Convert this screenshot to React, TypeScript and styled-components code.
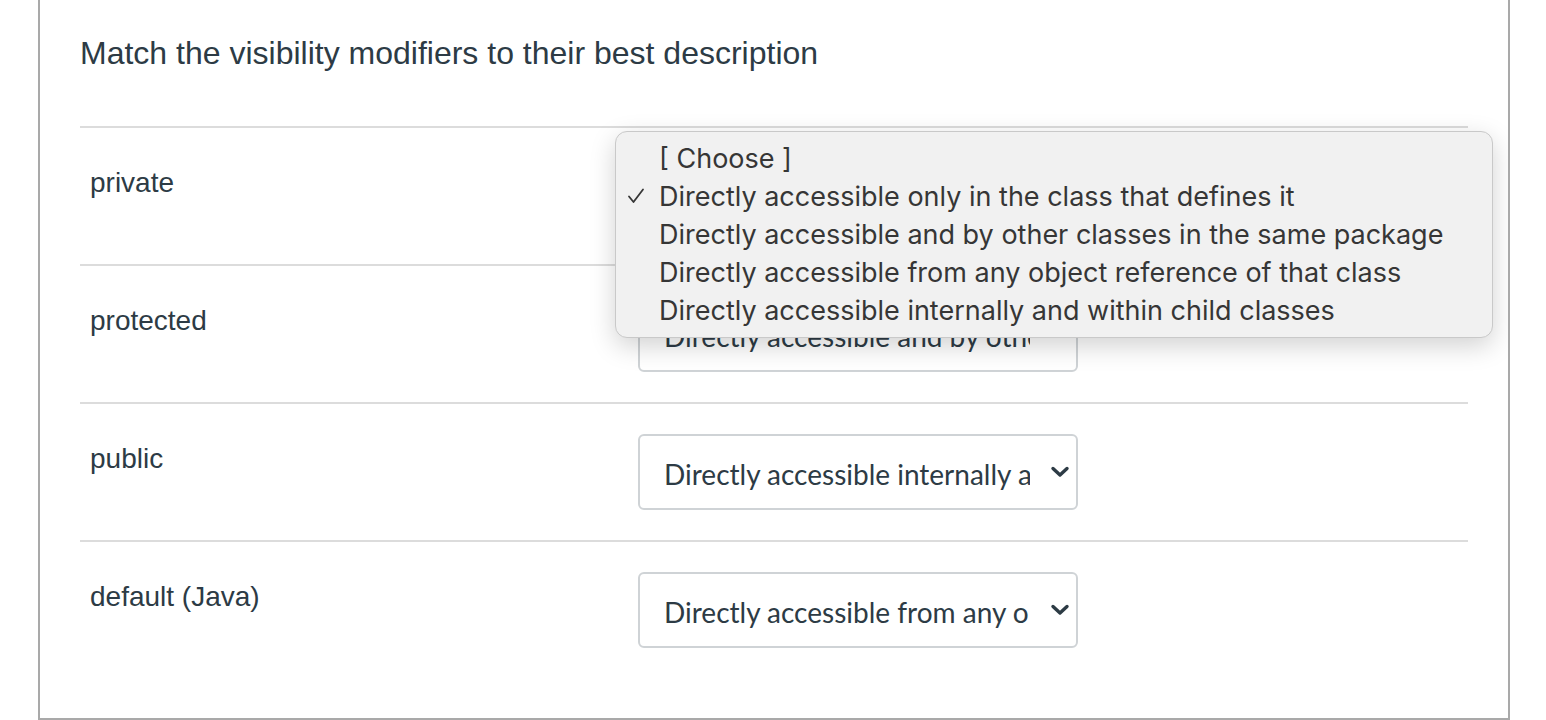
import React from 'react';
import styled, { createGlobalStyle } from 'styled-components';

const GlobalStyle = createGlobalStyle`
  html, body {
    margin: 0;
    padding: 0;
    background: #ffffff;
  }
`;

type Row = {
  label: string;
  value: string;
};

const rows: Row[] = [
  { label: 'private', value: 'Directly accessible only in the class that defines it' },
  { label: 'protected', value: 'Directly accessible and by other classes in the same package' },
  { label: 'public', value: 'Directly accessible internally and within child classes' },
  { label: 'default (Java)', value: 'Directly accessible from any object reference of that class' },
];

const options = [
  '[ Choose ]',
  'Directly accessible only in the class that defines it',
  'Directly accessible and by other classes in the same package',
  'Directly accessible from any object reference of that class',
  'Directly accessible internally and within child classes',
];

const Chevron = ({ faded }: { faded?: boolean }) =>
  faded ? (
    <svg width="20" height="12" viewBox="0 0 20 12" aria-hidden>
      <polyline
        points="8.5,5 10,6.5 11.5,5"
        fill="none"
        stroke="#6b7177"
        strokeWidth={1.4}
        strokeLinecap="round"
      />
    </svg>
  ) : (
    <svg width="20" height="12" viewBox="0 0 20 12" aria-hidden>
      <polyline
        points="3,2.5 10,9 17,2.5"
        fill="none"
        stroke="#2d3b45"
        strokeWidth={3.4}
        strokeLinecap="round"
        strokeLinejoin="round"
      />
    </svg>
  );

const Check = () => (
  <svg width="18" height="16" viewBox="0 0 18 16" aria-hidden>
    <polyline
      points="2,8.5 6.5,14 16,1.5"
      fill="none"
      stroke="#363636"
      strokeWidth={1.8}
      strokeLinecap="round"
      strokeLinejoin="round"
    />
  </svg>
);

export default function App() {
  return (
    <>
      <GlobalStyle />
      <StyledQuestion>
        <StyledTitle>Match the visibility modifiers to their best description</StyledTitle>
        <StyledAnswers>
          {rows.map((row, i) => (
            <StyledRow key={row.label}>
              <StyledLabel>{row.label}</StyledLabel>
              <StyledSelect>
                <StyledSelectText>{row.value}</StyledSelectText>
                <StyledChevronSlot>
                  <Chevron faded={i === 1} />
                </StyledChevronSlot>
              </StyledSelect>
            </StyledRow>
          ))}
        </StyledAnswers>
        <StyledMenu>
          {options.map((opt, i) => (
            <StyledOption key={opt}>
              <StyledCheck>{i === 1 && <Check />}</StyledCheck>
              {opt}
            </StyledOption>
          ))}
        </StyledMenu>
      </StyledQuestion>
    </>
  );
}

const StyledQuestion = styled.div`
  position: relative;
  box-sizing: border-box;
  margin-left: 38px;
  width: 1472px;
  height: 720px;
  border: 2px solid #a9a9a9;
  border-top: none;
  padding: 0 40px;
  overflow: hidden;
`;

const StyledTitle = styled.div`
  padding-top: 34px;
  height: 126px;
  box-sizing: border-box;
  font-family: 'Liberation Sans', Arial, sans-serif;
  font-size: 32px;
  line-height: 38px;
  color: #2d3b45;
`;

const StyledAnswers = styled.div`
  display: flex;
  flex-direction: column;
`;

const StyledRow = styled.div`
  display: grid;
  grid-template-columns: 558px 440px;
  height: 138px;
  box-sizing: border-box;
  border-top: 2px solid #dcdcdc;
`;

const StyledLabel = styled.div`
  padding: 39px 0 0 10px;
  font-family: 'Liberation Sans', Arial, sans-serif;
  font-size: 28px;
  line-height: 32px;
  color: #2d3b45;
`;

const StyledSelect = styled.div`
  margin-top: 30px;
  height: 76px;
  box-sizing: border-box;
  border: 2px solid #cfd3d6;
  border-radius: 6px;
  background: #ffffff;
  display: flex;
  align-items: center;
  padding: 3px 0 0 24px;
`;

const StyledSelectText = styled.div`
  flex: 1;
  overflow: hidden;
  white-space: nowrap;
  font-family: Lato, 'Liberation Sans', sans-serif;
  font-size: 28px;
  line-height: 34px;
  color: #2d3b45;
`;

const StyledChevronSlot = styled.div`
  width: 46px;
  flex: none;
  display: flex;
  justify-content: center;
  padding: 0 0 3px 14px;
  box-sizing: border-box;
`;

const StyledMenu = styled.div`
  position: absolute;
  left: 575px;
  top: 131px;
  width: 878px;
  height: 207px;
  box-sizing: border-box;
  padding-top: 7px;
  background: #f1f1f1;
  border: 1px solid #c9c9c9;
  border-radius: 12px;
  box-shadow: 0 8px 26px rgba(0, 0, 0, 0.18);
  display: flex;
  flex-direction: column;
`;

const StyledOption = styled.div`
  display: flex;
  align-items: center;
  height: 38px;
  font-family: Inter, 'Noto Sans', sans-serif;
  font-size: 27px;
  color: #363636;
  white-space: nowrap;
`;

const StyledCheck = styled.span`
  width: 43px;
  flex: none;
  padding-left: 11px;
  box-sizing: border-box;
  display: flex;
  align-items: center;
`;
